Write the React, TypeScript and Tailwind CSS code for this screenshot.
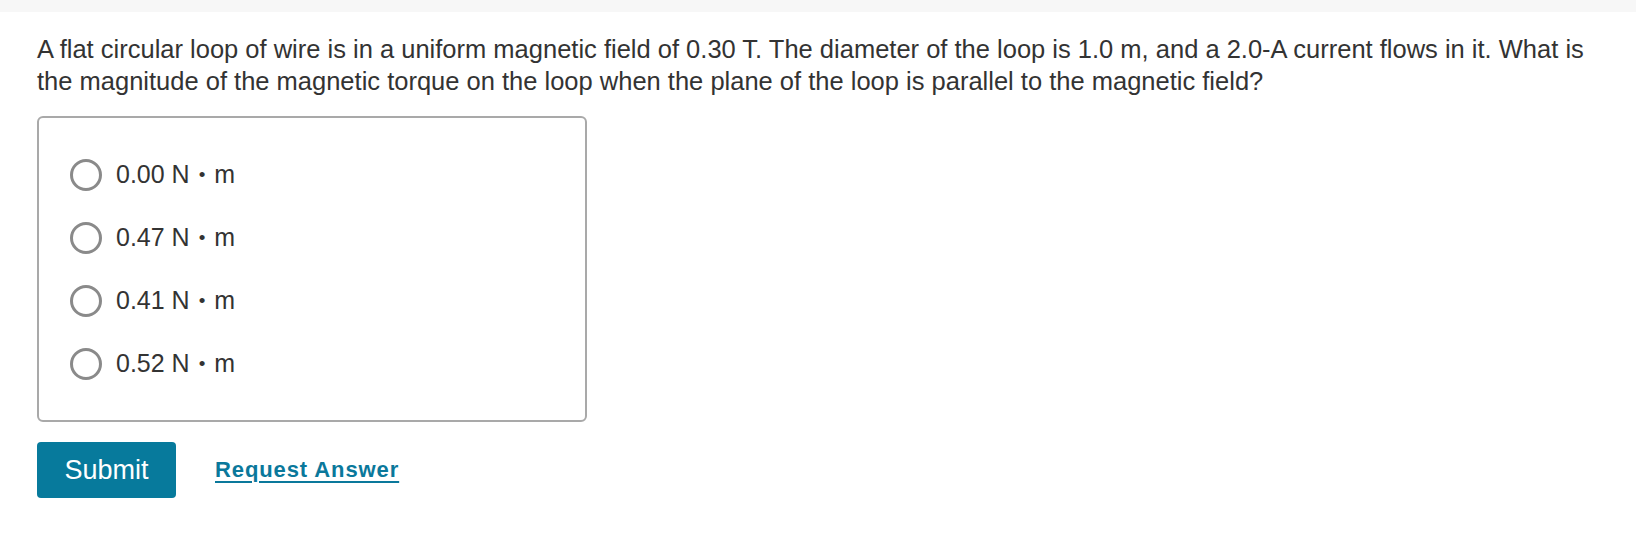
const options = ["0.00", "0.47", "0.41", "0.52"];

export default function App() {
  return (
    <div
      className="min-h-screen bg-white text-[#333]"
      style={{ fontFamily: '"Liberation Sans", Arial, sans-serif' }}
    >
      {/* top strip */}
      <div className="h-[12px] bg-[#f7f7f7]" />

      <div className="pl-[37px] pt-[21px]">
        <p className="max-w-[1582px] text-[25.5px] leading-[32px]">
          A flat circular loop of wire is in a uniform magnetic field of 0.30 T. The diameter of the loop is 1.0 m, and a
          2.0-A current flows in it. What is the magnitude of the magnetic torque on the loop when the plane of the loop
          is parallel to the magnetic field?
        </p>

        {/* answer choices */}
        <div className="mt-[19px] w-[550px] rounded-[6px] border-2 border-[#a9a9a9] pl-[31px] pt-[25px] pb-[25px]">
          {options.map((v) => (
            <label key={v} className="flex h-[63px] cursor-pointer items-center gap-[14px] text-[25px]">
              <span className="h-[32px] w-[32px] shrink-0 rounded-full border-[3px] border-[#8a8a8a] bg-white" />
              <span>
                {v} N <span className="px-[2px] text-[19px] align-[2px]">•</span> m
              </span>
            </label>
          ))}
        </div>

        {/* actions */}
        <div className="mt-[20px] flex items-center gap-[39px]">
          <button className="h-[56px] w-[139px] rounded-[4px] bg-[#077a9c] text-[27px] text-white">Submit</button>
          <a
            href="#"
            className="pb-[2px] text-[22px] font-bold tracking-[0.9px] text-[#0a789b] underline decoration-2 underline-offset-[4px]"
          >
            Request Answer
          </a>
        </div>
      </div>
    </div>
  );
}
